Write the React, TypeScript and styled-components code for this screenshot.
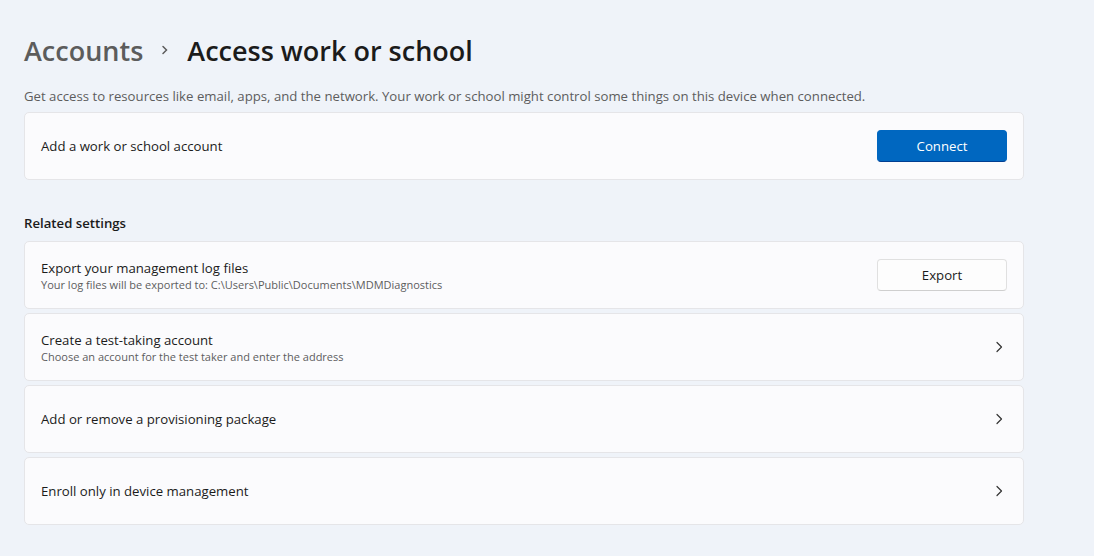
import React from "react";
import styled, { createGlobalStyle } from "styled-components";

const G = createGlobalStyle`
  body { margin:0; background:#eff3f9; font-family:"Segoe UI","Open Sans",sans-serif; color:#1b1b1b; }
`;
const Page = styled.div`padding:30px 0 0 24px; width:1000px; display:flex; flex-direction:column;`;
const Title = styled.h1`margin:0; display:flex; align-items:center; gap:16px; font-size:27px; font-weight:600; height:40px;`;
const Crumb = styled.span`color:#5c5c5c; font-weight:600;`;
const Sep = styled.span`color:#5c5c5c; display:flex;`;
const Desc = styled.p`margin:17px 0 7px; font-size:13.2px; color:#5d5d5d; line-height:18px;`;
const Card = styled.div`background:#fbfbfd; border:1px solid #e5e5e8; border-radius:5px; height:66px; padding:0 16px; display:flex; align-items:center; justify-content:space-between;`;
const List = styled.div`display:flex; flex-direction:column; gap:4px;`;
const Section = styled.h2`margin:33px 0 8px; font-size:13.2px; font-weight:600; line-height:20px;`;
const Texts = styled.div`display:flex; flex-direction:column; gap:1px;`;
const Main = styled.div`font-size:13.2px; line-height:18px;`;
const Sub = styled.div`font-size:11px; color:#5d5d5d; line-height:14px;`;
const Btn = styled.button<{ $primary?: boolean }>`
  width:130px; height:32px; border-radius:4px; font-family:inherit; font-size:13.2px; margin-right:0;
  background:${p => p.$primary ? "#0067c0" : "#fdfdfd"}; color:${p => p.$primary ? "#fff" : "#1b1b1b"};
  border:1px solid ${p => p.$primary ? "#0067c0" : "#e0e0e0"};
  border-bottom-color:${p => p.$primary ? "#003e92" : "#cfcfcf"};
`;
const Chev = () => (
  <svg width="16" height="16" viewBox="0 0 16 16" style={{ marginRight: 0 }}>
    <path d="M6 3.5 10.5 8 6 12.5" fill="none" stroke="#333" strokeWidth="1.2" strokeLinecap="round" strokeLinejoin="round" />
  </svg>
);

export default function App() {
  return (
    <>
      <G />
      <Page>
        <Title>
          <Crumb>Accounts</Crumb>
          <Sep><svg width="12" height="12" viewBox="0 0 12 12"><path d="M4 2.5 7.5 6 4 9.5" fill="none" stroke="#5c5c5c" strokeWidth="1.5" strokeLinecap="round" /></svg></Sep>
          <span>Access work or school</span>
        </Title>
        <Desc>Get access to resources like email, apps, and the network. Your work or school might control some things on this device when connected.</Desc>
        <Card>
          <Main>Add a work or school account</Main>
          <Btn $primary>Connect</Btn>
        </Card>
        <Section>Related settings</Section>
        <List>
          <Card>
            <Texts><Main>Export your management log files</Main><Sub>Your log files will be exported to: C:\Users\Public\Documents\MDMDiagnostics</Sub></Texts>
            <Btn>Export</Btn>
          </Card>
          <Card>
            <Texts><Main>Create a test-taking account</Main><Sub>Choose an account for the test taker and enter the address</Sub></Texts>
            <Chev />
          </Card>
          <Card><Main>Add or remove a provisioning package</Main><Chev /></Card>
          <Card><Main>Enroll only in device management</Main><Chev /></Card>
        </List>
      </Page>
    </>
  );
}
